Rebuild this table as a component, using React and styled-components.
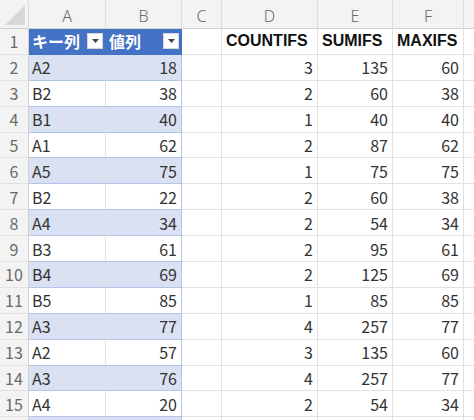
import styled, { createGlobalStyle } from 'styled-components';

const GlobalStyle = createGlobalStyle`
  html, body {
    margin: 0;
    padding: 0;
    background: #ffffff;
    overflow: hidden;
  }
`;

const rows = [
  ['A2', 18, 3, 135, 60],
  ['B2', 38, 2, 60, 38],
  ['B1', 40, 1, 40, 40],
  ['A1', 62, 2, 87, 62],
  ['A5', 75, 1, 75, 75],
  ['B2', 22, 2, 60, 38],
  ['A4', 34, 2, 54, 34],
  ['B3', 61, 2, 95, 61],
  ['B4', 69, 2, 125, 69],
  ['B5', 85, 1, 85, 85],
  ['A3', 77, 4, 257, 77],
  ['A2', 57, 3, 135, 60],
  ['A3', 76, 4, 257, 77],
  ['A4', 20, 2, 54, 34],
  ['', '', '', '', ''],
];

const letters = ['A', 'B', 'C', 'D', 'E', 'F', ''];

const Sheet = styled.div`
  display: grid;
  grid-template-columns: 29px 77px 76px 40px 96px 75px 71px 30px;
  grid-template-rows: 29px;
  grid-auto-rows: 25.9px;
  width: 494px;
  font-family: 'Noto Sans CJK JP', 'Noto Sans', sans-serif;
  font-size: 16px;
  color: #333333;
`;

const Cell = styled.div`
  box-sizing: border-box;
  display: flex;
  align-items: center;
  justify-content: ${p => (p.$right ? 'flex-end' : 'flex-start')};
  padding: 0 4px 0 3px;
  border-right: 1px solid #e1e1e1;
  border-bottom: 1px solid #e1e1e1;
  white-space: nowrap;
  overflow: hidden;
  line-height: 1;
  background: ${p => (p.$band ? '#d9e1f2' : '#ffffff')};
  ${p => p.$table && `
    border-bottom-color: #b4c6e7;
  `}
  ${p => p.$tableEnd && `
    border-right-color: #b4c6e7;
  `}
`;

const ColHead = styled.div`
  box-sizing: border-box;
  display: flex;
  align-items: center;
  justify-content: center;
  background: #f3f3f3;
  color: #6a6a6a;
  font-family: 'Noto Sans', sans-serif;
  font-weight: 300;
  font-size: 16px;
  border-right: 1px solid #dcdcdc;
  border-bottom: 1px solid #d0d0d0;
  padding-top: 4px;
`;

const Corner = styled(ColHead)`
  justify-content: flex-end;
  align-items: flex-end;
  padding: 0 3px 3px 0;
`;

const RowHead = styled.div`
  box-sizing: border-box;
  display: flex;
  align-items: center;
  justify-content: center;
  background: #f3f3f3;
  color: #6a6a6a;
  font-size: 16px;
  border-right: 1px solid #d0d0d0;
  border-bottom: 1px solid #e1e1e1;
  line-height: 1;
`;

const TableHead = styled.div`
  box-sizing: border-box;
  display: flex;
  align-items: center;
  justify-content: space-between;
  padding: 0 3px 0 3px;
  background: #4472c4;
  color: #ffffff;
  font-weight: 700;
  font-size: 16px;
  border-bottom: 1px solid #4472c4;
  line-height: 1;
`;

const FilterButton = styled.span`
  display: flex;
  align-items: center;
  justify-content: center;
  width: 16px;
  height: 16px;
  background: #ffffff;
  border: 1px solid #d6d6d6;
  box-sizing: border-box;
`;

const BoldHead = styled(Cell)`
  font-family: 'Liberation Sans', Arial, sans-serif;
  font-weight: 700;
  color: #111111;
  padding-left: 4px;
`;

const Arrow = () => (
  <svg width="7" height="4" viewBox="0 0 7 4">
    <path d="M0 0 L7 0 L3.5 4 Z" fill="#444" />
  </svg>
);

const Triangle = () => (
  <svg width="20" height="20" viewBox="0 0 20 20">
    <path d="M20 0 L20 20 L0 20 Z" fill="#d8d8d8" />
  </svg>
);

export default function App() {
  return (
    <>
      <GlobalStyle />
      <Sheet>
        <Corner>
          <Triangle />
        </Corner>
        {letters.map((l, i) => (
          <ColHead key={i}>{l}</ColHead>
        ))}

        <RowHead>1</RowHead>
        <TableHead>
          キー列
          <FilterButton>
            <Arrow />
          </FilterButton>
        </TableHead>
        <TableHead>
          値列
          <FilterButton>
            <Arrow />
          </FilterButton>
        </TableHead>
        <Cell />
        <BoldHead>COUNTIFS</BoldHead>
        <BoldHead>SUMIFS</BoldHead>
        <BoldHead>MAXIFS</BoldHead>
        <Cell />

        {rows.map((r, i) => {
          const band = i % 2 === 0;
          const last = i === rows.length - 1;
          return [
            <RowHead key={`h${i}`}>{last ? '' : i + 2}</RowHead>,
            <Cell key={`a${i}`} $band={band} $table>
              {r[0]}
            </Cell>,
            <Cell key={`b${i}`} $band={band} $table $tableEnd $right>
              {r[1]}
            </Cell>,
            <Cell key={`c${i}`} />,
            <Cell key={`d${i}`} $right>
              {r[2]}
            </Cell>,
            <Cell key={`e${i}`} $right>
              {r[3]}
            </Cell>,
            <Cell key={`f${i}`} $right>
              {r[4]}
            </Cell>,
            <Cell key={`g${i}`} />,
          ];
        })}
      </Sheet>
    </>
  );
}
